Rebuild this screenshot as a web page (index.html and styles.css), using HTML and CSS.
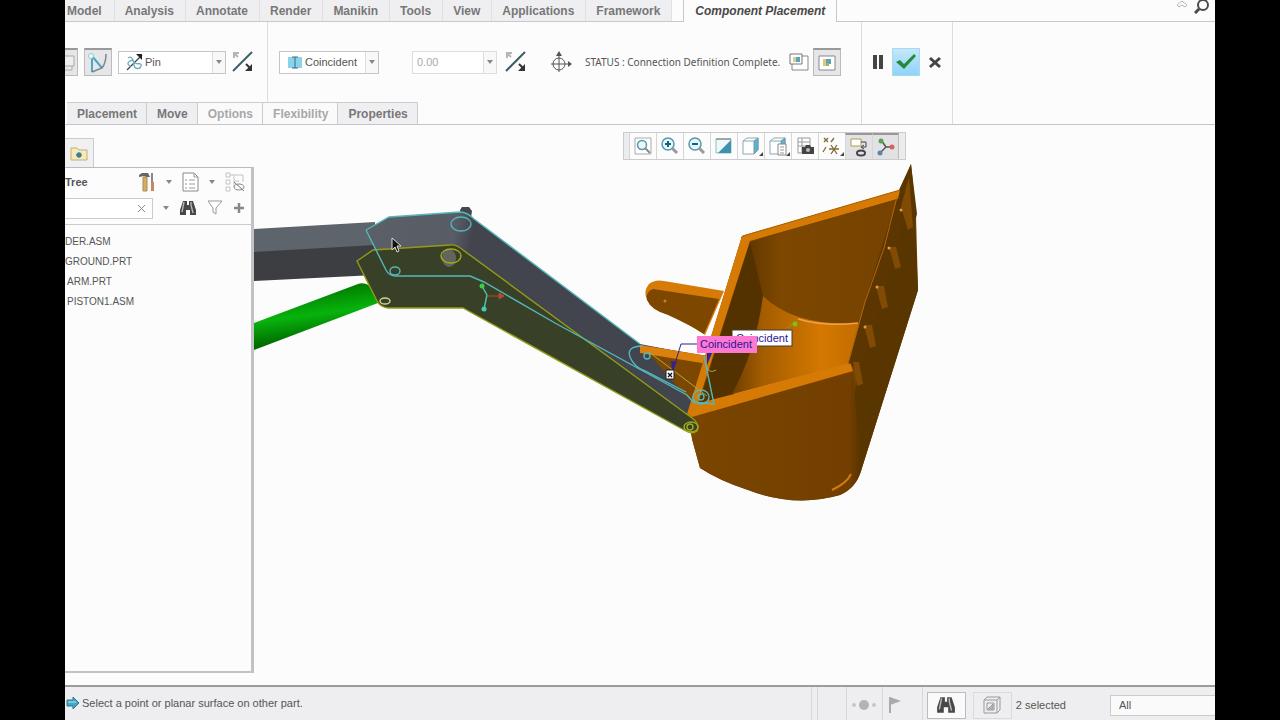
FILE: index.html
```
<!DOCTYPE html>
<html lang="en">
<head>
    <meta charset="UTF-8">
    <meta name="viewport" content="width=device-width, initial-scale=1.0">
    <title>Component Placement</title>
    <link rel="stylesheet" href="styles.css">
</head>
<body>
    <!-- shared icons -->
    <svg class="defs" width="0" height="0">
        <symbol id="flip" viewBox="0 0 22 22">
            <path d="M1 20L20 1" stroke="#3c5e66" stroke-width="2" fill="none"/>
            <path d="M2 7V2h5M2 2l4 4" stroke="#b5b5b5" stroke-width="2" fill="none"/>
            <path d="M14 13l4 4" stroke="#333" stroke-width="2"/>
            <path d="M20 13v7h-7z" fill="#333"/>
        </symbol>
        <symbol id="binoculars" viewBox="0 0 18 18">
            <path d="M4 2h4v4h2V2h4l3 9v5h-6v-5H7v5H1v-5z" fill="#484848"/>
            <path d="M5 3L3 13M12 3v3l2 8" stroke="#bbb" stroke-width="1.3" fill="none"/>
        </symbol>
        <symbol id="cube" viewBox="0 0 20 20">
            <path d="M2 5l4-3h11v12l-4 4H2z" fill="#fff" stroke="#8aa9b3"/>
            <path d="M13 5l4-3v12l-4 4z" fill="#5db3cf" stroke="#6d9cab"/>
            <path d="M2 5h11" stroke="#8aa9b3"/>
        </symbol>
        <symbol id="lens" viewBox="0 0 20 20">
            <circle cx="8" cy="8" r="6" fill="#e3f6fa" stroke="#5a97aa" stroke-width="1.5"/>
            <path d="M12 12l5 5" stroke="#999" stroke-width="3"/>
        </symbol>
    </svg>

    <div class="app">
        <nav class="menubar">
            <button class="menu">Model</button>
            <button class="menu">Analysis</button>
            <button class="menu">Annotate</button>
            <button class="menu">Render</button>
            <button class="menu">Manikin</button>
            <button class="menu">Tools</button>
            <button class="menu">View</button>
            <button class="menu">Applications</button>
            <button class="menu">Framework</button>
            <button class="menu active">Component Placement</button>
            <div class="menu-right">
                <svg width="12" height="10"><path d="M1 5l5-4 5 4-2 2-3-2-3 2z" fill="#fff" stroke="#b5b5b5"/></svg>
                <svg width="16" height="14"><circle cx="9" cy="5" r="5" fill="none" stroke="#4a4a4a" stroke-width="2"/><path d="M5 9l-4 4" stroke="#4a4a4a" stroke-width="3"/></svg>
            </div>
        </nav>

        <header class="ribbon">
            <div class="ribbon-main">
                <div class="controls">
                    <div class="group group-type">
                        <button class="tool pressed cut" aria-label="Interface">
                            <svg width="14" height="20"><path d="M0 3h10v10H0M0 17h8v-4" fill="#eee" stroke="#aaa"/></svg>
                        </button>
                        <button class="tool pressed" aria-label="Manual">
                            <svg width="22" height="22" fill="none"><path d="M5 20V4l10 12" stroke="#4fa6c0" stroke-width="2"/><path d="M5 20l10-4q4-5 4-14" stroke="#7a858c" stroke-width="1.5"/><circle cx="4" cy="4" r="2.5" fill="#fff" stroke="#8cc"/></svg>
                        </button>
                        <label class="combo pin">
                            <svg width="18" height="18" fill="none"><path d="M1 17L16 2" stroke="#444" stroke-width="1.3"/><path d="M10 1h6v6z" fill="#222"/><path d="M2 5c5-3 4 3 7 5s7-1 6 3-7 3-7-1-1-6-4-4-3 4 1 5" stroke="#6cacbf" stroke-width="1.3"/></svg>
                            <select aria-label="Connection type"><option>Pin</option></select>
                            <span class="arrow"></span>
                        </label>
                        <button class="flat flip" aria-label="Flip"><svg width="22" height="22"><use href="#flip"/></svg></button>
                    </div>
                    <div class="group group-constraint">
                        <label class="combo coincident">
                            <svg width="17" height="13"><path d="M1 1h14v11H1z" fill="#8bd3ea"/><path d="M8 1v11M5 1h6M5 12h6" stroke="#386b7c"/></svg>
                            <select aria-label="Constraint"><option>Coincident</option></select>
                            <span class="arrow"></span>
                        </label>
                        <label class="combo offset disabled">
                            <input type="text" value="0.00" aria-label="Offset" disabled>
                            <span class="arrow"></span>
                        </label>
                        <button class="flat" aria-label="Flip constraint"><svg width="22" height="22"><use href="#flip"/></svg></button>
                        <button class="flat target" aria-label="3D dragger"><svg width="22" height="22" fill="none" stroke="#555"><circle cx="8" cy="13" r="6"/><path d="M8 21V3M0 13h18"/><path d="M5 5l3-5 3 5zM17 10l4 3-4 3z" fill="#555" stroke="none"/></svg></button>
                        <span class="status-text">STATUS : Connection Definition Complete.</span>
                        <button class="flat window" aria-label="Separate window"><svg width="20" height="18"><path d="M3 3h16v14H3z" fill="#fff" stroke="#888"/><path d="M1 1h12v10H1z" fill="#fff" stroke="#777"/><path d="M4 4h3v5H4z" fill="#d9cf91"/><path d="M7 4h4v5H7z" fill="#5da3bd"/></svg></button>
                        <button class="tool pressed" aria-label="Assembly window"><svg width="18" height="16"><path d="M1 1h16v14H1z" fill="#fff" stroke="#888"/><path d="M5 4h4v7H5z" fill="#e0c583"/><path d="M8 4h5v5H8z" fill="#5da3bd"/><path d="M8 8h3v3H8z" fill="#92b46c"/></svg></button>
                    </div>
                </div>
                <div class="tabs">
                    <button class="tab">Placement</button>
                    <button class="tab">Move</button>
                    <button class="tab" disabled>Options</button>
                    <button class="tab" disabled>Flexibility</button>
                    <button class="tab">Properties</button>
                </div>
            </div>
            <div class="confirm">
                <button class="flat" aria-label="Pause"><svg width="12" height="14"><path d="M1 0h4v14H1zM7 0h4v14H7z" fill="#444"/></svg></button>
                <button class="ok" aria-label="OK"><svg width="22" height="18"><path d="M1 9l4-2 4 4L19 1l2 2L9 16z" fill="#258a3b"/></svg></button>
                <button class="flat" aria-label="Cancel"><svg width="14" height="14"><path d="M2 3l10 9M12 3L2 12" stroke="#444" stroke-width="3"/></svg></button>
            </div>
        </header>

        <main class="work">
            <aside class="sidebar">
                <button class="side-tab" aria-label="Folder browser">
                    <svg width="18" height="16"><path d="M1 3h6l2 2h8v10H1z" fill="#f8e9b8" stroke="#c6ae72"/><path d="M9 7v6M6 10h6M7 8l4 4M11 8l-4 4" stroke="#348297" stroke-width="1.3"/></svg>
                </button>
                <div class="tree">
                    <div class="tree-head">
                        <div class="row">
                            <h2>Tree</h2>
                            <button class="flat" aria-label="Settings"><svg width="18" height="20"><path d="M1 3l3-2h6l2 4H8L6 4 1 5z" fill="#666"/><path d="M5 5h4v14H5z" fill="#d5ad62" stroke="#a88c5a"/><path d="M14 1v9" stroke="#888" stroke-width="2"/><path d="M13 10h3v9h-3z" fill="#c8875f"/></svg></button>
                            <span class="caret"></span>
                            <button class="flat" aria-label="Show"><svg width="17" height="20"><path d="M1 1h11l4 4v14H1z" fill="#fff" stroke="#888"/><path d="M12 1v4h4M7 8h6M7 12h6M7 16h6M3 8h2M3 12h2M3 16h2" fill="none" stroke="#999"/></svg></button>
                            <span class="caret"></span>
                            <button class="flat last" aria-label="Hide"><svg width="20" height="20" fill="none" stroke="#c4c4c4"><path d="M1 1h4v4H1zM1 8h4v4H1zM1 15h4v4H1zM5 3h13v7M9 3v12M9 9h5"/><ellipse cx="14" cy="15" rx="5" ry="3" stroke="#888"/><path d="M9 10l10 9" stroke="#777"/></svg></button>
                        </div>
                        <div class="row">
                            <div class="search">
                                <input type="text" aria-label="Search tree">
                                <button class="flat" aria-label="Clear"><svg width="9" height="9"><path d="M1 1l7 7M8 1L1 8" stroke="#888"/></svg></button>
                            </div>
                            <span class="caret"></span>
                            <button class="flat" aria-label="Find"><svg width="18" height="18"><use href="#binoculars"/></svg></button>
                            <button class="flat" aria-label="Filter"><svg width="16" height="16"><path d="M1 1h14L9 8v6l-3-2V8z" fill="#fff" stroke="#999"/></svg></button>
                            <button class="flat" aria-label="Add"><svg width="12" height="12"><path d="M6 1v10M1 6h10" stroke="#888" stroke-width="2.5"/></svg></button>
                        </div>
                    </div>
                    <ul class="tree-list">
                        <li>DER.ASM</li>
                        <li>GROUND.PRT</li>
                        <li class="child">ARM.PRT</li>
                        <li class="child">PISTON1.ASM</li>
                    </ul>
                </div>
            </aside>

            <section class="viewport">
                <svg class="scene" viewBox="254 125 961 560" preserveAspectRatio="xMinYMin meet">
                    <defs>
                        <linearGradient id="cyl" x1="0" y1="0" x2="0.25" y2="1">
                            <stop offset="0.2" stop-color="#007c00"/><stop offset="0.55" stop-color="#08b30c"/><stop offset="0.9" stop-color="#006b00"/>
                        </linearGradient>
                        <linearGradient id="floor" x1="0" y1="0" x2="1" y2="0">
                            <stop offset="0" stop-color="#6f3f00"/><stop offset="0.25" stop-color="#a55d00"/><stop offset="0.7" stop-color="#d47800"/><stop offset="1" stop-color="#c26d00"/>
                        </linearGradient>
                        <linearGradient id="wall" x1="0" y1="0" x2="1" y2="0">
                            <stop offset="0" stop-color="#633900"/><stop offset="0.2" stop-color="#7d4700"/><stop offset="1" stop-color="#754200"/>
                        </linearGradient>
                        <linearGradient id="face" x1="0" y1="0" x2="1" y2="0">
                            <stop offset="0" stop-color="#794500"/><stop offset="0.93" stop-color="#733f00"/><stop offset="1" stop-color="#583400"/>
                        </linearGradient>
                        <linearGradient id="plate" gradientUnits="userSpaceOnUse" x1="370" y1="220" x2="490" y2="240">
                            <stop offset="0" stop-color="#5b6068"/><stop offset="0.7" stop-color="#585c64"/><stop offset="0.85" stop-color="#42454d"/>
                        </linearGradient>
                    </defs>

                    <!-- boom and piston -->
                    <path d="M254 229L375 222V248L254 254z" fill="#5d646b"/>
                    <path d="M254 252L375 245V275L254 281z" fill="#3d3e42"/>
                    <path d="M254 323L358 284C370 280 380 296 378 303L254 350z" fill="url(#cyl)"/>

                    <!-- rear arm plate -->
                    <path d="M460 210l2-3 7 0 3 4-1 7h-10z" fill="#44494d"/>
                    <path d="M366 230L389 217L460 212Q467 212 474 219L640 344L707 357L712 404L690 416L470 278L396 276Q389 275 386 270z" fill="url(#plate)"/>

                    <!-- bucket -->
                    <path d="M647 300Q643 291 649 284Q655 279 664 281L724 291L705 335L663 307Q650 306 647 300z" fill="#d67b08"/>
                    <path d="M647 300Q645 292 653 289L719 299L704 334Q690 325 668 315Q651 310 647 300z" fill="#7d4700"/>
                    <circle cx="665" cy="301" r="1.5" fill="#c38231"/>
                    <path d="M641 345L708 356L702 402L686 396z" fill="#7d4700"/>
                    <path d="M640 345L708 356V364L640 353z" fill="#dc800e"/>
                    <path d="M742 236L900 190L911 164L916 215L918 290L861 471Q856 488 840 495Q795 508 748 490Q720 481 700 468L692 439L687 415z" fill="#754200"/>
                    <path d="M898 192L911 164L917 214L915 221L918 290L861 471Q855 484 845 491L857 372L850 363z" fill="#593500"/>
                    <path d="M742 236L900 190L898 199L750 241L698 403L850 362L853 371L692 417L687 414z" fill="#d57a05"/>
                    <path d="M741 238Q742 236 746 235L900 190" fill="none" stroke="#ad6200"/>
                    <path d="M750 242L897 199L858 323Q800 332 762 297z" fill="url(#wall)"/>
                    <path d="M750 242L763 296Q758 350 734 394L699 403z" fill="#543200"/>
                    <path d="M763 296Q795 327 859 323L848 363L732 394Q756 350 763 296z" fill="url(#floor)"/>
                    <path d="M798 319Q825 327 858 323" fill="none" stroke="#f2a146" stroke-width="1.5"/>
                    <path d="M692 418L853 372L861 471Q856 488 840 495Q795 508 748 490Q720 481 700 468L692 439z" fill="url(#face)"/>
                    <path d="M897 199L869 288L848 364L864 359L885 294L904 220z" fill="#5c3600"/>
                    <path d="M897 197L884 248L865 302L848 364" fill="none" stroke="#b3690c"/>
                    <g fill="#824b03">
                        <path d="M901 207l8-30 4 50-5 3z"/>
                        <path d="M888 247h8l5 20-6 2-4-15z"/>
                        <path d="M876 286h8l4 21-6 2-4-15z"/>
                        <path d="M864 325h8l4 21-6 2-4-15z"/>
                        <path d="M853 362h6l4 22-6 2z"/>
                    </g>
                    <g fill="#e29a45"><circle cx="901" cy="210" r="1.5"/><circle cx="889" cy="248" r="1.5"/><circle cx="877" cy="287" r="1.5"/><circle cx="865" cy="327" r="1.5"/></g>
                    <path d="M832 490Q847 483 851 474" fill="none" stroke="#d37a08" stroke-width="2"/>

                    <!-- front arm plate -->
                    <path d="M357 261L373 250L450 245Q456 244 463 250L692 418Q700 424 697 431Q692 435 684 430L463 308H388Q380 307 377 301z" fill="#394028"/>
                    <path d="M357 261L373 250L450 245Q456 244 463 250L692 418Q700 424 697 431Q692 435 684 430L463 308H388Q380 307 377 301z" fill="none" stroke="#929b17" stroke-width="1.4"/>
                    <g fill="none" stroke="#54b7bb" stroke-width="1.4">
                        <path d="M366 230L389 217L460 212Q467 212 474 219L640 344"/>
                        <path d="M366 230L386 270Q389 276 396 276H470L484 282L555 323L687 395L693 402L714 404L704 356"/>
                        <path d="M643 346Q626 346 630 357Q634 367 645 371L686 392"/>
                        <ellipse cx="461" cy="224" rx="10" ry="7"/>
                        <ellipse cx="395" cy="271" rx="5" ry="4"/>
                        <ellipse cx="701" cy="397" rx="8" ry="7"/><circle cx="701" cy="397" r="3"/>
                        <circle cx="647" cy="356" r="3"/>
                    </g>
                    <path d="M649 352L707 396M707 367q2 7 9 3" fill="none" stroke="#a2a958"/>
                    <ellipse cx="449" cy="258" rx="7" ry="9" fill="#62645e"/>
                    <g fill="none" stroke="#a3ac1f" stroke-width="1.4">
                        <ellipse cx="451" cy="256" rx="10" ry="7"/><ellipse cx="691" cy="427" rx="7" ry="5"/><circle cx="690" cy="427" r="3"/>
                        <ellipse cx="385" cy="301" rx="5" ry="3" stroke="#d4d692"/>
                    </g>
                    <path d="M482 286l5 9-3 14" fill="none" stroke="#43c4a2" stroke-width="1.5"/>
                    <path d="M487 296h12M499 293l5 3-5 3z" stroke="#b94634" fill="#b94634"/>
                    <circle cx="482" cy="286" r="2.5" fill="#3ccd50"/><circle cx="484" cy="309" r="2.5" fill="#45cbbb"/>
                    <path d="M787 328l10-7" stroke="#77a11c"/><circle cx="795" cy="324" r="2.5" fill="#82bd18"/>

                    <!-- constraint tags -->
                    <path d="M697 344H681L673 370" fill="none" stroke="#292781"/>
                    <path d="M671 361l6 1-5 9zM707 352l5 1-5 12z" fill="#32219b"/>
                    <rect x="666" y="370" width="8" height="9" fill="#fff" stroke="#222"/><path d="M668 373l4 4M672 373l-4 4" stroke="#111" stroke-width="1.3"/>
                    <rect x="732" y="330" width="60" height="16" fill="#fff" stroke="#453a38"/>
                    <text class="tag" x="736" y="342">Coincident</text>
                    <rect x="697" y="336" width="60" height="17" fill="#fc78d3"/>
                    <text class="tag" x="700" y="348">Coincident</text>

                    <path d="M392 238v12l3-3 2 5 2-1-2-5h4z" fill="#111" stroke="#ddd"/>
                </svg>

                <div class="viewbar">
                    <button aria-label="Refit"><svg width="20" height="20"><path d="M2 2h16v16H2z" fill="#fff" stroke="#aaa"/><circle cx="9" cy="9" r="4.5" fill="#eaf7fb" stroke="#5a97aa" stroke-width="1.5"/><path d="M12 12l5 5" stroke="#888" stroke-width="2"/></svg></button>
                    <button aria-label="Zoom in"><svg width="20" height="20"><use href="#lens"/><path d="M5 8h6M8 5v6" stroke="#176278" stroke-width="2"/></svg></button>
                    <button aria-label="Zoom out"><svg width="20" height="20"><use href="#lens"/><path d="M5 8h6" stroke="#176278" stroke-width="2"/></svg></button>
                    <button aria-label="Repaint"><svg width="20" height="20"><path d="M2 3h15v14H2z" fill="#eef7fa" stroke="#9bb"/><path d="M17 4v13H4z" fill="#3c93ad"/><path d="M2 3h15" stroke="#777"/></svg></button>
                    <button class="more" aria-label="Display style"><svg width="20" height="20"><use href="#cube"/></svg></button>
                    <button class="more" aria-label="Saved views"><svg width="20" height="20"><use href="#cube"/><path d="M10 8h8v11h-8z" fill="#fff" stroke="#888"/><path d="M12 11h4M12 14h4M12 17h4" stroke="#999"/></svg></button>
                    <button aria-label="View manager"><svg width="20" height="20"><path d="M3 2h12v15H3zM3 6h12M3 10h12M7 2v15" fill="#fff" stroke="#999"/><path d="M7 11h3l1-2h4l1 2h3v7H7z" fill="#444"/><circle cx="13" cy="14" r="2" fill="#bbb"/></svg></button>
                    <button class="more" aria-label="Datum display"><svg width="20" height="20" fill="none" stroke="#806b38" stroke-width="1.3"><path d="M2 2l4 4M6 2L2 6M12 2l-3 4M4 11l-3 5M9 18l6-9M7 13h10M9 9l6 9"/></svg></button>
                    <button class="on" aria-label="Annotation display"><svg width="20" height="20" fill="none"><path d="M2 2h10v7H2z" fill="#fff" stroke="#aaa04f"/><path d="M12 5h5v5h-4M15 8l-3 2 3 2" stroke="#444"/><ellipse cx="12" cy="16" rx="4" ry="2.5" stroke="#444" stroke-width="2"/></svg></button>
                    <button class="on" aria-label="Spin center"><svg width="20" height="20"><path d="M5 3l5 7-6 6M10 10h6" fill="none" stroke="#555" stroke-width="1.5"/><circle cx="5" cy="4" r="2.5" fill="#5b9f54"/><circle cx="16" cy="10" r="2.5" fill="#d76357"/><circle cx="4" cy="16" r="2.5" fill="#6480ad"/></svg></button>
                </div>
            </section>
        </main>

        <footer class="statusbar">
            <p class="message">
                <svg width="14" height="14"><path d="M1 4h6V1l6 6-6 6v-3H1z" fill="#45a6c6" stroke="#28788f"/><path d="M2 6h8" stroke="#b8e6f2"/></svg>
                Select a point or planar surface on other part.
            </p>
            <div class="status-right">
                <span class="cell gap"></span>
                <span class="cell spacer"></span>
                <span class="cell"><svg width="26" height="14" fill="#c6c6c6"><circle cx="13" cy="7" r="5" fill="#b3b3b3"/><circle cx="3" cy="7" r="2"/><circle cx="23" cy="7" r="2"/></svg></span>
                <span class="cell flag"><svg width="14" height="18"><path d="M2 1v16" stroke="#aaa" stroke-width="2"/><path d="M2 1l11 4-11 4z" fill="#aaa"/></svg></span>
                <button class="status-btn find" aria-label="Find"><svg width="20" height="20"><use href="#binoculars"/></svg></button>
                <button class="status-btn" aria-label="Selection buffer"><svg width="20" height="20" fill="none" stroke="#999"><path d="M2 5l3-3h13v13l-3 3H2zM2 5h13v13M15 5l3-3M5 8h7v7H5z"/><path d="M6 14l5-5v5z" fill="#bbb"/></svg></button>
                <span class="count">2 selected</span>
                <select class="filter" aria-label="Selection filter"><option>All</option></select>
            </div>
        </footer>
    </div>
</body>
</html>
```
FILE: styles.css
```
* {
    box-sizing: border-box;
}
body {
    margin: 0;
    background: #000;
    font-family: "Liberation Sans", Arial, sans-serif;
    font-size: 11px;
    color: #555;
}
button, input, select {
    font: inherit;
    color: inherit;
    margin: 0;
    padding: 0;
    border: none;
    background: none;
}
svg {
    display: block;
    flex: none;
}
.defs {
    position: absolute;
}
.app {
    display: flex;
    flex-direction: column;
    height: 100vh;
    margin: 0 65px;
    background: #fcfcfc;
    overflow: hidden;
}

/* menu */
.menubar {
    display: flex;
    height: 22px;
    flex: none;
    border-bottom: 1px solid #c8c8cb;
}
.menu {
    padding: 0 11px 0 10px;
    border-right: 1px solid #e0e0e3;
    background: #efeff2;
    font-size: 12px;
    font-weight: bold;
    color: #777;
}
.menu:first-child {
    padding: 0 12px 0 2px;
}
.menu.active {
    height: 22px;
    margin-left: 11px;
    padding: 0 11px;
    border: 1px solid #c8c8cb;
    border-width: 0 1px;
    background: #fcfcfc;
    font-style: italic;
    color: #484848;
}
.menu-right {
    display: flex;
    gap: 6px;
    margin-left: auto;
    padding-right: 5px;
}

/* ribbon */
.ribbon {
    display: flex;
    height: 103px;
    flex: none;
    border-bottom: 1px solid #c4c4c8;
}
.ribbon-main {
    width: 797px;
    border-right: 1px solid #dcdcdf;
}
.controls {
    display: flex;
    height: 80px;
}
.group {
    display: flex;
    align-items: center;
}
.group-type {
    width: 203px;
    gap: 6px;
    border-right: 1px solid #dcdcdf;
}
.group-constraint {
    padding-left: 11px;
}
.flat, .tool, .ok {
    display: flex;
    align-items: center;
    justify-content: center;
}
.tool {
    width: 28px;
    height: 28px;
    border: 1px solid #bbb;
}
.tool.pressed {
    background: #e6e6e9;
    border-top: 2px solid #999;
}
.tool.cut {
    width: 13px;
    border-left: none;
}
.combo {
    display: flex;
    align-items: center;
    height: 23px;
    border: 1px solid #c6c6c6;
    background: #fff;
}
.combo svg {
    margin: 0 1px 0 7px;
}
.combo select, .combo input {
    flex: 1;
    min-width: 0;
    height: 20px;
    appearance: none;
}
.pin {
    width: 108px;
}
.coincident {
    width: 100px;
}
.offset {
    width: 85px;
    margin: 0 8px 0 33px;
    padding-left: 4px;
}
.disabled {
    color: #aaa;
    border-color: #ddd;
}
.arrow {
    display: flex;
    align-items: center;
    justify-content: center;
    width: 13px;
    height: 100%;
    border-left: 1px solid #ddd;
    background: #f8f8f8;
}
.arrow::after, .caret {
    content: "";
    border: 3px solid transparent;
    border-top: 4px solid #888;
    border-bottom: none;
}
.target {
    margin: 0 12px 0 24px;
}
.status-text {
    min-width: 200px;
    font-family: "Noto Sans", "Liberation Sans", sans-serif;
    font-size: 10px;
    white-space: nowrap;
}
.window {
    margin: 0 4px;
}
.tabs {
    display: flex;
    height: 22px;
    padding-left: 2px;
}
.tab {
    padding: 0 9px 0 10px;
    border: 1px solid #ccccd0;
    border-width: 1px 1px 0 0;
    background: #efeff2;
    font-size: 12px;
    font-weight: bold;
    color: #777;
}
.tab:disabled {
    background: #fafafa;
    color: #a8a8a8;
}
.confirm {
    display: flex;
    align-items: center;
    justify-content: center;
    gap: 8px;
    width: 91px;
    padding-bottom: 22px;
    border-right: 1px solid #dcdcdf;
}
.ok {
    width: 28px;
    height: 28px;
    border: 1px solid #a9d8f2;
    background: linear-gradient(#c4e8fb, #8fd3f8);
}

/* model tree */
.work {
    display: flex;
    flex: 1;
    min-height: 0;
}
.sidebar {
    display: flex;
    flex-direction: column;
    width: 189px;
    flex: none;
    padding: 13px 0 12px;
}
.side-tab {
    display: flex;
    align-items: center;
    justify-content: center;
    width: 29px;
    height: 29px;
    border: 1px solid #ccc;
    border-width: 1px 1px 0 0;
    background: #f0f0f3;
}
.tree {
    flex: 1;
    border: 1px solid #bbb;
    border-left: none;
    border-right: 3px solid #c2c2c5;
    border-bottom: 2px solid #c2c2c5;
}
.tree-head {
    padding: 1px 0 3px;
    border-bottom: 1px solid #ccc;
}
.row {
    display: flex;
    align-items: center;
    gap: 10px;
    height: 26px;
    padding-right: 6px;
}
.row h2 {
    flex: 1;
    margin: 0;
    font-size: 11px;
}
.search {
    display: flex;
    flex: 1;
    align-items: center;
    min-width: 0;
    height: 21px;
    padding-right: 6px;
    border: 1px solid #ccc;
    border-left: none;
    background: #fff;
}
.search input {
    flex: 1;
    width: 0;
    min-width: 0;
}
.tree-list {
    margin: 0;
    padding: 7px 0;
    list-style: none;
    font-size: 10px;
    line-height: 20px;
}
.child {
    padding-left: 2px;
}

/* graphics area */
.viewport {
    position: relative;
    flex: 1;
}
.scene {
    width: 100%;
    height: 100%;
}
.tag {
    font-size: 11px;
    fill: #2b1496;
}
.viewbar {
    position: absolute;
    top: 7px;
    left: 369px;
    display: flex;
    height: 28px;
    padding: 0 6px 0 5px;
    border: 1px solid #ccc;
    background: #ececef;
}
.viewbar button {
    position: relative;
    display: flex;
    align-items: center;
    justify-content: center;
    width: 27px;
    border-left: 1px solid #d6d6d9;
    background: #fcfcfc;
}
.viewbar button:last-child {
    border-right: 1px solid #bbb;
}
.viewbar .on {
    border-top: 2px solid #999;
    background: #e2e2e5;
}
.viewbar .more::after {
    content: "";
    position: absolute;
    right: 1px;
    bottom: 3px;
    border: 2px solid #444;
    border-top-color: transparent;
    border-left-color: transparent;
}

/* status bar */
.statusbar {
    display: flex;
    height: 35px;
    flex: none;
    justify-content: space-between;
    border-top: 2px solid #9c9c9f;
    background: #eeeef1;
}
.message {
    display: flex;
    align-items: center;
    gap: 2px;
    height: 32px;
    margin: 0;
    padding-left: 1px;
}
.status-right {
    display: flex;
    align-items: center;
    height: 36px;
}
.cell {
    display: flex;
    align-items: center;
    justify-content: center;
    width: 36px;
    height: 36px;
    border-left: 1px solid #d8d8db;
}
.cell.gap {
    width: 6px;
}
.cell.spacer {
    width: 29px;
}
.cell.flag {
    justify-content: flex-start;
    width: 41px;
    padding-left: 5px;
    border-right: 1px solid #d8d8db;
}
.status-btn {
    display: flex;
    align-items: center;
    justify-content: center;
    width: 39px;
    height: 27px;
    margin-left: 4px;
    border: 1px solid #dadadd;
}
.status-btn.find {
    margin-right: 3px;
    border-color: #bbb;
    background: #fafafa;
}
.count {
    margin: 0 44px 0 4px;
    white-space: nowrap;
}
.filter {
    width: 105px;
    height: 21px;
    padding-left: 8px;
    border: 1px solid #ccc;
    border-right: none;
    background: #fafafa;
    appearance: none;
}
```
